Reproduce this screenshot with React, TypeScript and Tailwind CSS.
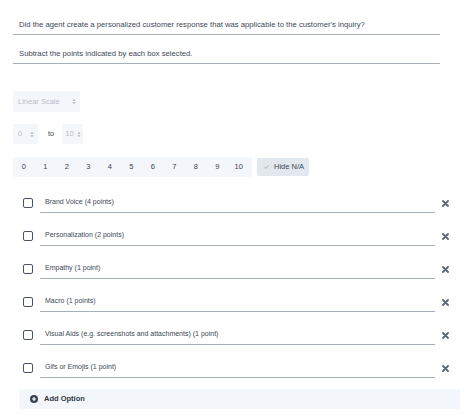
import React from "react";

const options = [
  "Brand Voice (4 points)",
  "Personalization (2 points)",
  "Empathy (1 point)",
  "Macro (1 points)",
  "Visual Aids (e.g. screenshots and attachments) (1 point)",
  "Gifs or Emojis (1 point)",
];

const scale = ["0", "1", "2", "3", "4", "5", "6", "7", "8", "9", "10"];

function Updown() {
  return (
    <svg width="4" height="7" viewBox="0 0 4 7" className="shrink-0">
      <path d="M0.5 2.8 L2 1 L3.5 2.8 Z M0.5 4.2 L2 6 L3.5 4.2 Z" fill="#a3acb9" />
    </svg>
  );
}

function XIcon() {
  return (
    <svg width="7" height="7" viewBox="0 0 7 7">
      <path d="M1 1 L6 6 M6 1 L1 6" stroke="#5b6675" strokeWidth="1.8" strokeLinecap="round" />
    </svg>
  );
}

export default function App() {
  return (
    <div
      className="w-[474px] h-[415px] bg-white px-[13px] pt-[15px] text-[#3d4755]"
      style={{ fontFamily: '"Liberation Sans", Arial, sans-serif' }}
    >
      <div className="w-[427px] h-[20px] flex items-center pl-[6px] border-b-[1.5px] border-[#a7afba] text-[7.7px]">
        Did the agent create a personalized customer response that was applicable to the customer's inquiry?
      </div>
      <div className="mt-[9px] w-[427px] h-[20px] flex items-center pl-[6px] border-b-[1.5px] border-[#a7afba] text-[7.7px]">
        Subtract the points indicated by each box selected.
      </div>

      <div className="mt-[27px] w-[67px] h-[21px] bg-[#f3f6fa] rounded-[2px] flex items-center justify-between pl-[5px] pr-[4px] text-[7.5px] text-[#b7bfca]">
        <span>Linear Scale</span>
        <Updown />
      </div>

      <div className="mt-[12px] flex items-center h-[20px]">
        <div className="w-[25px] h-[20px] bg-[#f3f6fa] rounded-[2px] flex items-center justify-between pl-[5px] pr-[4px] text-[7.5px] text-[#b7bfca]">
          <span>0</span>
          <Updown />
        </div>
        <span className="ml-[10px] text-[7.5px] text-[#3d4755]">to</span>
        <div className="ml-[8px] w-[21px] h-[20px] bg-[#f3f6fa] rounded-[2px] flex items-center justify-between pl-[3px] pr-[2px] text-[7.5px] text-[#b7bfca]">
          <span>10</span>
          <Updown />
        </div>
      </div>

      <div className="mt-[13px] flex items-center">
        <div className="w-[239px] h-[20px] bg-[#f3f6fa] rounded-[2px] flex items-center text-[7.5px] text-[#3d4755]">
          {scale.map((n) => (
            <span key={n} className="w-[21.5px] text-center">
              {n}
            </span>
          ))}
        </div>
        <div className="ml-[5px] w-[52px] h-[18px] bg-[#e3e8ee] rounded-[2px] flex items-center pl-[7px] gap-[5px] text-[7.5px] text-[#3d4755]">
          <svg width="5" height="4" viewBox="0 0 5 4">
            <path d="M0.5 2 L2 3.4 L4.5 0.6" stroke="#9aa4b1" strokeWidth="0.8" fill="none" />
          </svg>
          <span>Hide N/A</span>
        </div>
      </div>

      <div className="mt-[16px] flex flex-col gap-[13px]">
        {options.map((o) => (
          <div key={o} className="flex items-center h-[20px]">
            <div className="ml-[10px] w-[10px] h-[10px] border-[1.5px] border-[#4a5463] rounded-[2px]" />
            <div className="ml-[7px] w-[395px] h-[20px] flex items-center pl-[5px] border-b-[1.5px] border-[#a7afba] text-[7px]">
              {o}
            </div>
            <div className="ml-[7px] flex items-center">
              <XIcon />
            </div>
          </div>
        ))}
      </div>

      <div className="mt-[11px] ml-[6px] w-[441px] h-[20px] bg-[#f3f6fa] flex items-center pl-[11px] text-[7.5px] font-bold text-[#2f3846]">
        <svg width="8" height="8" viewBox="0 0 8 8">
          <circle cx="4" cy="4" r="4" fill="#3a4352" />
          <path d="M4 2 V6 M2 4 H6" stroke="white" strokeWidth="1.2" />
        </svg>
        <span className="ml-[6px]">Add Option</span>
      </div>
    </div>
  );
}
